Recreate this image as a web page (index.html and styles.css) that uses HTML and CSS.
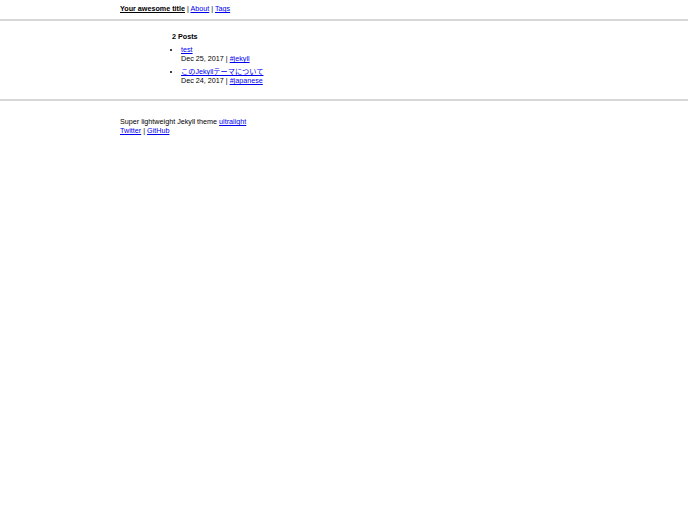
FILE: index.html
```html
<!DOCTYPE html>
<html lang="ja">
<head>
<meta charset="utf-8">
<title>Your awesome title</title>
<link rel="stylesheet" href="styles.css">
</head>
<body>
<header class="site-header">
  <div class="wrap">
    <a class="site-title" href="#">Your awesome title</a> | <a href="#">About</a> | <a href="#">Tags</a>
  </div>
</header>
<main class="content">
  <div class="wrap">
    <div class="posts">
      <h2 class="count">2 Posts</h2>
      <ul class="post-list">
        <li>
          <a href="#">test</a><br>
          <span class="meta">Dec 25, 2017 | <a href="#">#jekyll</a></span>
        </li>
        <li>
          <a href="#">このJekyllテーマについて</a><br>
          <span class="meta">Dec 24, 2017 | <a href="#">#japanese</a></span>
        </li>
      </ul>
    </div>
  </div>
</main>
<footer class="site-footer">
  <div class="wrap">
    Super lightweight Jekyll theme <a href="#">ultralight</a><br>
    <a href="#">Twitter</a> | <a href="#">GitHub</a>
  </div>
</footer>
</body>
</html>
```
FILE: styles.css
```css
html, body {
  margin: 0;
  padding: 0;
  background: #fff;
}
body {
  font-family: "Liberation Sans", Arial, "Noto Sans CJK JP", sans-serif;
  font-size: 7.2px;
  line-height: 9px;
  color: #000;
}
a {
  color: #0000ee;
}
.wrap {
  margin-left: 120px;
}
.site-header {
  padding-top: 4px;
  height: 15px;
  border-bottom: 2px solid #d6d6d6;
}
.site-title {
  color: #000;
  font-weight: bold;
}
.content {
  padding-top: 11px;
  padding-bottom: 14px;
  border-bottom: 2px solid #d6d6d6;
}
.posts {
  margin-left: 52px;
}
.count {
  font-size: 7.2px;
  font-weight: bold;
  margin: 0 0 4px 0;
}
.post-list {
  margin: 0;
  padding-left: 9px;
}
.post-list li {
  margin-bottom: 4px;
}
.post-list li:last-child {
  margin-bottom: 0;
}
.site-footer {
  padding-top: 16px;
}
```
